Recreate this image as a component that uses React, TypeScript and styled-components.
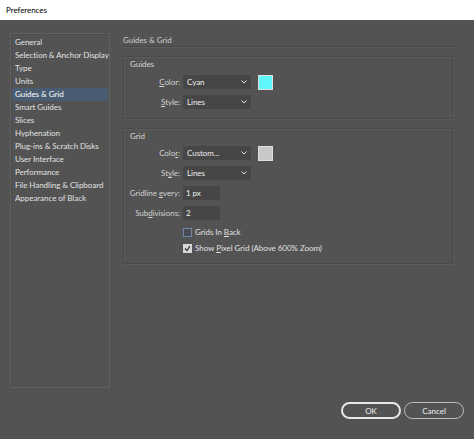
import React from "react";
import styled, { createGlobalStyle } from "styled-components";

const Global = createGlobalStyle`
  html, body { margin: 0; padding: 0; background: #535353; }
  body { font-family: Lato, "Noto Sans", sans-serif; font-size: 8px; letter-spacing: -0.05px; -webkit-font-smoothing: antialiased; }
  * { box-sizing: border-box; }
`;

const Window = styled.div`
  width: 474px;
  height: 439px;
  display: flex;
  flex-direction: column;
  background: #535353;
  overflow: hidden;
`;

const TitleBar = styled.div`
  height: 20px;
  flex: none;
  background: #ffffff;
  color: #000;
  display: flex;
  align-items: center;
  padding-left: 6px;
`;

const Body = styled.div`
  flex: 1;
  display: flex;
  flex-direction: column;
  padding: 13px 10px 20px 10px;
`;

const Main = styled.div`
  display: flex;
  align-items: flex-start;
`;

const Sidebar = styled.ul`
  list-style: none;
  margin: 0;
  width: 100px;
  height: 355px;
  padding: 2px 1px;
  border: 1px solid #606060;
  box-shadow: inset 1px 1px 0 #4c4c4c;
`;

const NavItem = styled.li<{ $active?: boolean }>`
  height: 13px;
  line-height: 13px;
  padding-left: 3px;
  white-space: nowrap;
  color: ${(p) => (p.$active ? "#ffffff" : "#e2e2e2")};
  background: ${(p) => (p.$active ? "#4a5c72" : "transparent")};
`;

const Content = styled.div`
  margin-left: 13px;
  width: 330px;
  display: flex;
  flex-direction: column;
`;

const Heading = styled.div`
  color: #cfcfcf;
  height: 14px;
  line-height: 12px;
  padding-top: 1px;
  border-bottom: 1px solid #474747;
  box-shadow: 0 1px 0 #5c5c5c;
`;

const Group = styled.section<{ $h: number }>`
  margin-top: 9px;
  height: ${(p) => p.$h}px;
  border: 1px solid #4a4a4a;
  box-shadow: 1px 1px 0 #5c5c5c, inset 1px 1px 0 #5c5c5c;
  padding: 1px 0 0 0;
`;

const GroupTitle = styled.div<{ $gap: number }>`
  color: #d4d4d4;
  padding-left: 6px;
  height: 12px;
  line-height: 12px;
  margin-bottom: ${(p) => p.$gap}px;
`;

const Form = styled.div`
  display: grid;
  grid-template-columns: 56px auto;
  column-gap: 3px;
  align-items: center;
`;

const Label = styled.label`
  text-align: right;
  color: #d2d2d2;
  white-space: nowrap;
`;

const Cell = styled.div`
  display: flex;
  align-items: center;
  gap: 7px;
  height: 20px;
`;

const Select = styled.div`
  width: 68px;
  height: 14px;
  background: #464646;
  color: #f0f0f0;
  display: flex;
  align-items: center;
  justify-content: space-between;
  padding: 0 4px 0 4px;
`;

const Swatch = styled.div<{ $c: string }>`
  width: 15px;
  height: 15px;
  background: ${(p) => p.$c};
  border: 1px solid #e0e0e0;
`;

const Input = styled.div`
  width: 37px;
  height: 14px;
  background: #464646;
  color: #f0f0f0;
  display: flex;
  align-items: center;
  padding-left: 3px;
`;

const CheckRow = styled.div<{ $first?: boolean }>`
  display: flex;
  align-items: center;
  gap: 3px;
  height: 16px;
  margin-top: ${(p) => (p.$first ? "1px" : "0")};
  color: #e0e0e0;
  grid-column: 2;
`;

const Box = styled.span<{ $checked?: boolean }>`
  width: 9px;
  height: 9px;
  display: inline-flex;
  align-items: center;
  justify-content: center;
  border: 1px solid ${(p) => (p.$checked ? "#d8d8d8" : "#6f86a6")};
  background: ${(p) => (p.$checked ? "#d8d8d8" : "#484c52")};
`;

const U = styled.span`
  text-decoration: underline;
  text-underline-offset: 1px;
`;

const Footer = styled.div`
  margin-top: auto;
  display: flex;
  justify-content: flex-end;
  gap: 3px;
`;

const Button = styled.button<{ $primary?: boolean }>`
  width: 60px;
  height: 17px;
  border-radius: 9px;
  background: #535353;
  color: #f0f0f0;
  font-family: inherit;
  font-size: 8px;
  padding: 0;
  border: ${(p) => (p.$primary ? "2px solid #e8e8e8" : "1px solid #bdbdbd")};
`;

const Chevron = () => (
  <svg width="6" height="4" viewBox="0 0 6 4">
    <polyline points="0.5,0.5 3,3 5.5,0.5" fill="none" stroke="#e0e0e0" strokeWidth="1" />
  </svg>
);

const Check = () => (
  <svg width="7" height="7" viewBox="0 0 7 7">
    <polyline points="1,3.5 3,5.5 6,1" fill="none" stroke="#333" strokeWidth="1.3" />
  </svg>
);

const items = [
  "General",
  "Selection & Anchor Display",
  "Type",
  "Units",
  "Guides & Grid",
  "Smart Guides",
  "Slices",
  "Hyphenation",
  "Plug-ins & Scratch Disks",
  "User Interface",
  "Performance",
  "File Handling & Clipboard",
  "Appearance of Black",
];

export default function App() {
  return (
    <Window>
      <Global />
      <TitleBar>Preferences</TitleBar>
      <Body>
        <Main>
          <Sidebar>
            {items.map((it) => (
              <NavItem key={it} $active={it === "Guides & Grid"}>
                {it}
              </NavItem>
            ))}
          </Sidebar>
          <Content>
            <Heading>Guides &amp; Grid</Heading>
            <Group $h={63}>
              <GroupTitle $gap={2}>Guides</GroupTitle>
              <Form>
                <Label><U>C</U>olor:</Label>
                <Cell>
                  <Select>Cyan<Chevron /></Select>
                  <Swatch $c="#5ef6f8" />
                </Cell>
                <Label><U>S</U>tyle:</Label>
                <Cell>
                  <Select>Lines<Chevron /></Select>
                </Cell>
              </Form>
            </Group>
            <Group $h={136}>
              <GroupTitle $gap={1}>Grid</GroupTitle>
              <Form>
                <Label>Colo<U>r</U>:</Label>
                <Cell>
                  <Select>Custom...<Chevron /></Select>
                  <Swatch $c="#c8c8c8" />
                </Cell>
                <Label>St<U>y</U>le:</Label>
                <Cell>
                  <Select>Lines<Chevron /></Select>
                </Cell>
                <Label>Gridline <U>e</U>very:</Label>
                <Cell>
                  <Input>1 px</Input>
                </Cell>
                <Label>Sub<U>d</U>ivisions:</Label>
                <Cell>
                  <Input>2</Input>
                </Cell>
                <CheckRow $first>
                  <Box />
                  <span>Grids In <U>B</U>ack</span>
                </CheckRow>
                <CheckRow>
                  <Box $checked><Check /></Box>
                  <span>Show <U>P</U>ixel Grid (Above 600% Zoom)</span>
                </CheckRow>
              </Form>
            </Group>
          </Content>
        </Main>
        <Footer>
          <Button $primary>OK</Button>
          <Button>Cancel</Button>
        </Footer>
      </Body>
    </Window>
  );
}
